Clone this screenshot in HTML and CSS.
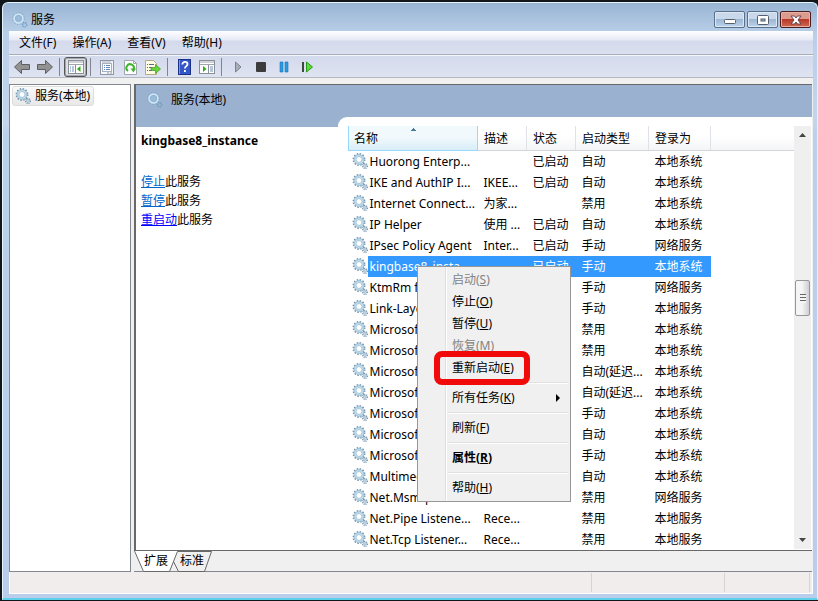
FILE: index.html
```
<!DOCTYPE html>
<html lang="zh-CN">

<head>
    <meta charset="UTF-8">
    <meta name="viewport" content="width=device-width, initial-scale=1.0">
    <title>服务</title>
    <link rel="stylesheet" href="styles.css">
</head>

<body>
    <svg class="defs" width="0" height="0">
        <symbol id="gear" viewBox="0 0 16 16">
            <circle cx="7" cy="6.500" r="5.700" fill="none" stroke="#6f93ae" stroke-width="1.500" stroke-dasharray="1.490 1.490" />
            <circle cx="7" cy="6.500" r="4.200" fill="none" stroke="#b9dbee" stroke-width="1.800" />
            <circle cx="7" cy="6.500" r="5" fill="none" stroke="#87abc3" stroke-width="0.600" />
            <circle cx="7" cy="6.500" r="3" fill="#fff" stroke="#87abc3" stroke-width="0.700" />
            <circle cx="13" cy="13" r="2.400" fill="none" stroke="#6b8fab" stroke-width="1.200" stroke-dasharray="1 0.880" />
            <circle cx="13" cy="13" r="1.300" fill="#fff" stroke="#8db0c8" stroke-width="1" />
        </symbol>
        <symbol id="gear-pale" viewBox="0 0 16 16">
            <circle cx="6.500" cy="6.500" r="5.600" fill="none" stroke="#7ba6c9" stroke-width="1.200" stroke-dasharray="1.400 1.500" />
            <circle cx="6.500" cy="6.500" r="4.300" fill="none" stroke="#d0e8f5" stroke-width="1.900" />
            <circle cx="6.500" cy="6.500" r="3.200" fill="#9dbbd9" stroke="#7fa9cb" stroke-width="0.600" />
            <circle cx="12.600" cy="12.800" r="2.100" fill="none" stroke="#6f9abf" stroke-width="1.400" stroke-dasharray="1.100 0.800" />
        </symbol>
    </svg>
    <div class="window">
        <div class="title">
            <svg class="icon"><use href="#gear-pale" /></svg>
            <span class="name">服务</span>
            <button class="cap" aria-label="最小化"><svg width="30" height="16"><rect x="9.500" y="7.500" width="11" height="4" rx="1" fill="#fff" stroke="#555e6b" /></svg></button>
            <button class="cap" aria-label="最大化"><svg width="30" height="16"><rect x="9.500" y="3.500" width="11" height="9" rx="1" fill="#fff" stroke="#555e6b" /><rect x="13" y="7" width="4" height="2" fill="#9db9d9" stroke="#555e6b" /></svg></button>
            <button class="cap close" aria-label="关闭"><svg width="30" height="16"><path d="M10 4h3.500l1.500 2 1.500-2h3.500l-3 4 3 4h-3.500l-1.500-2-1.500 2h-3.500l3-4z" fill="#fff" stroke="#5b3a42" stroke-width="0.900" /></svg></button>
        </div>
        <div class="main">
            <div class="menubar">
                <button>文件(F)</button>
                <button>操作(A)</button>
                <button>查看(V)</button>
                <button>帮助(H)</button>
            </div>
            <div class="toolbar">
                <button aria-label="后退"><svg width="18" height="16"><path d="M1.500 8l7-6.500v4h8v5h-8v4z" fill="#929292" stroke="#5e5e5e" /></svg></button>
                <button aria-label="前进"><svg width="18" height="16"><path d="M16.500 8l-7-6.500v4h-8v5h8v4z" fill="#929292" stroke="#5e5e5e" /></svg></button>
                <i class="line"></i>
                <button class="on" aria-label="显示/隐藏控制台树"><svg width="16" height="16"><rect x="0.500" y="1.500" width="15" height="13" fill="#fff" stroke="#8a8f98" /><path d="M1 3h14M1 5.500h14" stroke="#9fa6b2" /><path d="M7.500 6v8" stroke="#8a8f98" /><path d="M2 8h4M2 10h4M2 12h4" stroke="#6a8fc0" stroke-dasharray="1 1 2" /><path d="M12.500 7v6l-3.500-3z" fill="#2eaa1c" /></svg></button>
                <i class="line"></i>
                <button aria-label="属性"><svg width="16" height="16"><rect x="1.500" y="1.500" width="13" height="14" fill="#f4f6f9" stroke="#8f97a5" /><rect x="3.500" y="4.500" width="9" height="8" fill="#fff" stroke="#a8b0bd" /><path d="M3 3h9" stroke="#a8b0bd" /><path d="M5 6.500h1M7 6.500h4M5 8.500h1M7 8.500h4M5 10.500h1M7 10.500h4" stroke="#5a87c0" /><path d="M8 14h2M11 14h2" stroke="#8f97a5" /></svg></button>
                <button aria-label="刷新"><svg width="16" height="16"><path d="M2.500 1.500h9l3 3v11h-12z" fill="#fff" stroke="#a0a6ae" /><path d="M11.500 1.500v3h3" fill="none" stroke="#a0a6ae" /><path d="M6 12a3.700 3.700 0 1 1 5.500-1.500" fill="none" stroke="#3fb32c" stroke-width="2" /><path d="M8.500 9.500h5.500l-2.500 4z" fill="#3fb32c" /></svg></button>
                <button aria-label="导出列表"><svg width="17" height="16"><path d="M1.500 1.500h8l3 3v11h-11z" fill="#fffbe4" stroke="#b3ab82" /><path d="M3 5.500h1M5 5.500h5M3 8.500h1M5 8.500h3M3 11.500h1M5 11.500h3" stroke="#5c6b7d" /><path d="M7 8.500h4.500v-3l5 4.500-5 4.500v-3h-4.500z" fill="#69d339" stroke="#3a9a1f" stroke-width="0.700" /></svg></button>
                <i class="line"></i>
                <button aria-label="帮助"><svg width="16" height="16"><rect x="2.500" y="0.500" width="12" height="15" fill="#3457c8" stroke="#1b2f86" /><path d="M3.500 1v14" stroke="#7d97e8" /><path d="M6.300 5.500c0-3.500 5.200-3.200 5.200-.3 0 2-2.600 1.900-2.600 4.300M8.900 11v2" fill="none" stroke="#fff" stroke-width="1.800" /></svg></button>
                <button aria-label="显示/隐藏操作窗格"><svg width="16" height="16"><rect x="0.500" y="1.500" width="15" height="13" fill="#fff" stroke="#8a8f98" /><path d="M1 3h14M1 5.500h14" stroke="#9fa6b2" /><path d="M9.500 6v8" stroke="#8a8f98" /><path d="M11 8h3M11 10h3M11 12h3" stroke="#6a8fc0" /><path d="M4 7v6l3.500-3z" fill="#2eaa1c" /></svg></button>
                <i class="line"></i>
                <button aria-label="启动服务"><svg width="16" height="16"><path d="M5.500 3v10l5.500-5z" fill="#a9aeb8" stroke="#7d828c" /></svg></button>
                <button aria-label="停止服务"><svg width="16" height="16"><rect x="3" y="3" width="10" height="10" rx="1" fill="#3c3c3c" /></svg></button>
                <button aria-label="暂停服务"><svg width="16" height="16"><path d="M4 3h3v10h-3zM9 3h3v10h-3z" fill="#2b9be0" stroke="#1a74b8" stroke-width="0.600" /></svg></button>
                <button aria-label="重新启动服务"><svg width="16" height="16"><path d="M3 3h2v10h-2z" fill="#3d4b3d" /><path d="M7.500 3v10l6-5z" fill="#5cdb3c" stroke="#2a9a18" /></svg></button>
            </div>
            <div class="panes">
                <div class="tree">
                    <a href="#" class="node"><svg class="icon"><use href="#gear" /></svg>服务(本地)</a>
                </div>
                <div class="right">
                    <div class="view">
                        <div class="band"><svg class="icon"><use href="#gear-pale" /></svg>服务(本地)</div>
                        <div class="body">
                            <div class="detail">
                                <h1>kingbase8_instance</h1>
                                <p><a href="#">停止</a>此服务</p>
                                <p><a href="#">暂停</a>此服务</p>
                                <p><a href="#" class="active">重启动</a>此服务</p>
                            </div>
                            <div class="list">
                                <table>
                                    <colgroup>
                                        <col class="c1"><col class="c2"><col class="c3"><col class="c4"><col class="c5"><col>
                                    </colgroup>
                                    <thead>
                                        <tr><th class="sorted">名称</th><th>描述</th><th>状态</th><th>启动类型</th><th>登录为</th><th></th></tr>
                                    </thead>
                                    <tbody>
                                        <tr><td><svg class="icon"><use href="#gear" /></svg><span>Huorong Enterp...</span></td><td></td><td>已启动</td><td>自动</td><td>本地系统</td></tr>
                                        <tr><td><svg class="icon"><use href="#gear" /></svg><span>IKE and AuthIP I...</span></td><td>IKEE...</td><td>已启动</td><td>自动</td><td>本地系统</td></tr>
                                        <tr><td><svg class="icon"><use href="#gear" /></svg><span>Internet Connect...</span></td><td>为家...</td><td></td><td>禁用</td><td>本地系统</td></tr>
                                        <tr><td><svg class="icon"><use href="#gear" /></svg><span>IP Helper</span></td><td>使用 ...</td><td>已启动</td><td>自动</td><td>本地系统</td></tr>
                                        <tr><td><svg class="icon"><use href="#gear" /></svg><span>IPsec Policy Agent</span></td><td>Inter...</td><td>已启动</td><td>手动</td><td>网络服务</td></tr>
                                        <tr class="selected"><td><svg class="icon"><use href="#gear" /></svg><span>kingbase8_insta...</span></td><td></td><td>已启动</td><td>手动</td><td>本地系统</td></tr>
                                        <tr><td><svg class="icon"><use href="#gear" /></svg><span>KtmRm for</span></td><td></td><td></td><td>手动</td><td>网络服务</td></tr>
                                        <tr><td><svg class="icon"><use href="#gear" /></svg><span>Link-Layer</span></td><td></td><td></td><td>手动</td><td>本地服务</td></tr>
                                        <tr><td><svg class="icon"><use href="#gear" /></svg><span>Microsoft</span></td><td></td><td></td><td>禁用</td><td>本地系统</td></tr>
                                        <tr><td><svg class="icon"><use href="#gear" /></svg><span>Microsoft</span></td><td></td><td></td><td>禁用</td><td>本地系统</td></tr>
                                        <tr><td><svg class="icon"><use href="#gear" /></svg><span>Microsoft</span></td><td></td><td></td><td>自动(延迟...</td><td>本地系统</td></tr>
                                        <tr><td><svg class="icon"><use href="#gear" /></svg><span>Microsoft</span></td><td></td><td></td><td>自动(延迟...</td><td>本地系统</td></tr>
                                        <tr><td><svg class="icon"><use href="#gear" /></svg><span>Microsoft</span></td><td></td><td></td><td>手动</td><td>本地系统</td></tr>
                                        <tr><td><svg class="icon"><use href="#gear" /></svg><span>Microsoft</span></td><td></td><td></td><td>自动</td><td>本地系统</td></tr>
                                        <tr><td><svg class="icon"><use href="#gear" /></svg><span>Microsoft</span></td><td></td><td></td><td>手动</td><td>本地系统</td></tr>
                                        <tr><td><svg class="icon"><use href="#gear" /></svg><span>Multimedia</span></td><td></td><td></td><td>自动</td><td>本地系统</td></tr>
                                        <tr><td><svg class="icon"><use href="#gear" /></svg><span>Net.Msmq</span></td><td></td><td></td><td>禁用</td><td>网络服务</td></tr>
                                        <tr><td><svg class="icon"><use href="#gear" /></svg><span>Net.Pipe Listene...</span></td><td>Rece...</td><td></td><td>禁用</td><td>本地服务</td></tr>
                                        <tr><td><svg class="icon"><use href="#gear" /></svg><span>Net.Tcp Listener...</span></td><td>Rece...</td><td></td><td>禁用</td><td>本地服务</td></tr>
                                    </tbody>
                                </table>
                                <div class="scroll">
                                    <button aria-label="向上滚动"><svg width="7" height="4"><path d="M0 4l3.500-4 3.500 4z" fill="#444" /></svg></button>
                                    <div class="track"><div class="thumb"></div></div>
                                    <button aria-label="向下滚动"><svg width="7" height="4"><path d="M0 0l3.500 4 3.500-4z" fill="#444" /></svg></button>
                                </div>
                            </div>
                        </div>
                    </div>
                    <div class="tabs">
                        <svg class="shape" width="80" height="21">
                            <path d="M0 0h43l-8 20.500h-26z" fill="#fff" />
                            <path d="M0.500 0l9 20.500h26l8-20h34l-7 20h-26l-5-10" fill="none" stroke="#696969" />
                        </svg>
                        <button>扩展</button>
                        <button>标准</button>
                    </div>
                </div>
            </div>
            <div class="status">
                <div></div>
                <div class="s2"></div>
                <div class="s3"></div>
            </div>
        </div>
        <div class="popup">
            <button disabled>启动(<u>S</u>)</button>
            <button>停止(<u>O</u>)</button>
            <button>暂停(<u>U</u>)</button>
            <button disabled>恢复(<u>M</u>)</button>
            <button class="marked">重新启动(<u>E</u>)</button>
            <hr>
            <button class="sub"><span>所有任务(<u>K</u>)</span><svg width="4" height="8"><path d="M0 0l4 4-4 4z" /></svg></button>
            <hr>
            <button>刷新(<u>F</u>)</button>
            <hr>
            <button class="bold">属性(<u>R</u>)</button>
            <hr>
            <button>帮助(<u>H</u>)</button>
        </div>
    </div>
</body>

</html>
```
FILE: styles.css
```
*,
*::before,
*::after {
    box-sizing: border-box;
}

body {
    margin: 0;
    padding: 2px 0 1px 2px;
    height: 100vh;
    background-color: #10161a;
    font-family: "Noto Sans", "Noto Sans CJK SC", sans-serif;
    font-size: 12px;
    line-height: 20px;
    color: #000;
    overflow: hidden;
}

button {
    margin: 0;
    padding: 0;
    border: none;
    background: none;
    font: inherit;
    color: inherit;
}

.defs {
    position: absolute;
}

.icon {
    width: 16px;
    height: 16px;
    flex: none;
}

.window {
    position: relative;
    display: flex;
    flex-direction: column;
    height: 100%;
    padding: 0 4px 4px 6px;
    border: 1px solid #e4f2fb;
    border-bottom: 2px solid #5fd0ea;
    border-radius: 6px 6px 0 0;
    background: linear-gradient(#98b4d4, #b9cfe8 30px, #c3d5ec 120px, #b9d1ea 130px, #bacdea);
}

.title {
    display: flex;
    align-items: center;
    height: 28px;
    flex: none;
    padding: 5px 2px 0 3px;
}

.title .name {
    flex: 1;
    margin-left: 3px;
}

.cap {
    display: flex;
    width: 31px;
    height: 17px;
    margin-left: 2px;
    border: 1px solid #5a6f8a;
    border-radius: 2px;
    background: linear-gradient(#c9d9eb 45%, #9db7d4 50%, #bcd2ea);
    box-shadow: inset 0 0 0 1px #dce8f4;
}

.close {
    border-color: #4b1d22;
    background: linear-gradient(#dd9a8e 45%, #b8392a 50%, #d0694f);
    box-shadow: inset 0 0 0 1px #e5b0a6;
}

.main {
    flex: 1;
    min-height: 0;
    display: flex;
    flex-direction: column;
    background-color: #f0f0f0;
}

.menubar {
    display: flex;
    height: 24px;
    flex: none;
    padding: 1px 0 0 10px;
    gap: 16px;
    border-bottom: 1px solid #a7adba;
    background: linear-gradient(#fff, #e6eaf5 9px, #d4daec 10px, #dbe0f0);
}

.toolbar {
    display: flex;
    align-items: center;
    height: 23px;
    flex: none;
    padding-left: 1px;
    border-top: 1px solid #f6f7fb;
    border-bottom: 1px solid #b3b7c0;
    background: linear-gradient(#d3daec, #dfe3f2);
}

.toolbar button {
    display: flex;
    align-items: center;
    justify-content: center;
    width: 23px;
    height: 20px;
}

.toolbar .on {
    border: 1px solid #555;
    border-radius: 3px;
    background-color: #dcdfe6;
    box-shadow: inset 0 0 0 1px #a5a8ae;
}

.toolbar .line {
    width: 1px;
    height: 18px;
    margin: 0 4px 0 3px;
    background-color: #80848e;
}

.panes {
    flex: 1;
    min-height: 0;
    display: flex;
    gap: 3px;
    padding: 6px 1px 0 0;
}

.tree {
    width: 122px;
    flex: none;
    padding: 1px 2px;
    border: 1px solid #828790;
    background-color: #fff;
}

.node {
    display: inline-flex;
    align-items: center;
    gap: 4px;
    height: 20px;
    padding: 0 3px 0 2px;
    border: 1px solid #ddd;
    border-radius: 3px;
    background: linear-gradient(#fafafa, #e8e8e8);
    color: #000;
    text-decoration: none;
}

.right {
    flex: 1;
    min-width: 0;
    display: flex;
    flex-direction: column;
}

.view {
    flex: 1;
    min-height: 0;
    display: flex;
    flex-direction: column;
    border: 1px solid #696969;
    border-left-width: 2px;
    border-right: none;
    background-color: #fff;
}

.band {
    display: flex;
    align-items: center;
    gap: 8px;
    height: 32px;
    flex: none;
    padding: 0 0 2px 11px;
    background-color: #9ab2d0;
}

.body {
    flex: 1;
    min-height: 0;
    display: flex;
    background: linear-gradient(#9ab2d0 10px, #fff 10px);
}

.detail {
    width: 202px;
    flex: none;
    padding: 14px 5px;
    line-height: 19px;
}

.detail h1 {
    margin: 0 0 22px;
    font-size: 12px;
}

.detail p {
    margin: 0;
}

.detail a {
    color: #06c;
}

.detail .active {
    color: #00f;
}

.list {
    flex: 1;
    min-width: 0;
    display: flex;
    align-items: stretch;
    padding: 9px 1px 1px 10px;
    border-top-left-radius: 9px;
    background-color: #fff;
}

table {
    flex: 1;
    width: 0;
    align-self: flex-start;
    table-layout: fixed;
    border-collapse: collapse;
}

.c1 {
    width: 129px;
}

.c2,
.c3 {
    width: 49px;
}

.c4 {
    width: 73px;
}

.c5 {
    width: 62px;
}

th {
    height: 24px;
    padding: 2px 0 0 6px;
    border-right: 1px solid #dfe3e8;
    border-bottom: 1px solid #d5d5d5;
    background: linear-gradient(#fff 40%, #f4f5f7);
    font-weight: normal;
    text-align: left;
    white-space: nowrap;
}

th:last-child {
    border-right: none;
}

.sorted {
    padding-left: 5px;
    border-left: 1px solid #96d9f9;
    border-right-color: #96d9f9;
    border-bottom-color: #96d9f9;
    background: conic-gradient(from 135deg at 50% 0, #4c7a96 90deg, transparent 90deg) 61px 2px / 7px 3px no-repeat, linear-gradient(#f2f9fc 45%, #d8edf8);
}

td {
    height: 21px;
    padding: 0 0 0 6px;
    line-height: 21px;
    white-space: nowrap;
    overflow: hidden;
}

td:first-child {
    display: flex;
    align-items: center;
    padding-left: 3px;
}

td span {
    flex: 1;
    padding-left: 2px;
}

.selected td,
.selected span {
    background-color: #39f;
    color: #fff;
}

.selected td:first-child {
    background-color: #fff;
}

.scroll {
    display: flex;
    flex-direction: column;
    width: 17px;
    flex: none;
    background-color: #efefef;
}

.scroll button {
    display: flex;
    align-items: center;
    justify-content: center;
    height: 18px;
}

.track {
    flex: 1;
    display: flex;
    flex-direction: column;
}

.track::before {
    content: "";
    flex: 136;
}

.track::after {
    content: "";
    flex: 214;
}

.thumb {
    height: 36px;
    margin: 0 1px;
    border: 1px solid #979797;
    border-radius: 2px;
    background: repeating-linear-gradient(#666 0 1px, #f5f5f5 1px 3px) 4px 13px / 6px 9px no-repeat, linear-gradient(90deg, #f5f5f5 45%, #cfcfd2);
}

.tabs {
    position: relative;
    display: flex;
    height: 21px;
    flex: none;
    gap: 12px;
    padding-left: 10px;
    border-bottom: 1px solid #828790;
}

.tabs .shape {
    position: absolute;
    left: 0;
    top: 0;
}

.tabs button {
    position: relative;
    height: 20px;
}

.status {
    display: flex;
    height: 22px;
    flex: none;
    padding: 1px 2px 1px 0;
    border: 1px solid #fff;
    border-top: none;
    background-color: #f0edec;
}

.status div {
    flex: 1;
    border-right: 1px solid #d5d2d1;
}

.status .s2 {
    flex: none;
    width: 133px;
}

.status .s3 {
    flex: none;
    width: 85px;
}

.popup {
    position: absolute;
    left: 414px;
    top: 263px;
    width: 154px;
    padding: 2px;
    border: 1px solid #979797;
    background: linear-gradient(90deg, #f0f0f0 27px, #e0e0e0 27px 28px, #fff 28px 29px, #f0f0f0 29px);
}

.popup button {
    position: relative;
    display: block;
    width: 100%;
    height: 22px;
    padding-left: 32px;
    text-align: left;
}

.popup button:disabled {
    color: #838383;
}

.popup .bold {
    font-weight: bold;
}

.popup .sub {
    display: flex;
    align-items: center;
    justify-content: space-between;
    padding-right: 8px;
}

.popup hr {
    height: 2px;
    margin: 3px 0 3px 28px;
    border: none;
    border-top: 1px solid #e0e0e0;
    border-bottom: 1px solid #fff;
}

/* red frame round the restart command */
.marked::after {
    content: "";
    position: absolute;
    left: 14px;
    top: -6px;
    width: 96px;
    height: 34px;
    border: 6px solid #f00a0a;
    border-radius: 8px;
}
```
